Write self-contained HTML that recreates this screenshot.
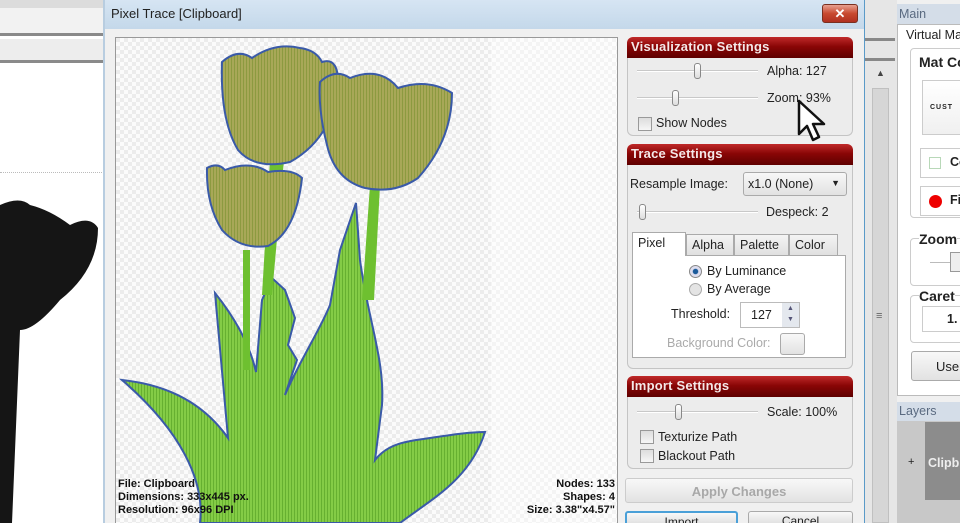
<!DOCTYPE html>
<html style="overflow:hidden"><head><meta charset="utf-8"><style>
*{margin:0;padding:0;box-sizing:border-box}
html,body{width:960px;height:523px;overflow:hidden}
body{position:relative;background:#f0f0f0;font-family:"Liberation Sans",sans-serif;font-size:12.5px;color:#222}
.a{position:absolute;white-space:nowrap}
.hdr{position:absolute;left:627px;width:226px;height:21px;border-radius:6px 6px 0 0;background:linear-gradient(#c02a2a,#8a0606 45%,#5e0000);color:#f4e8e8;font-weight:bold;font-size:13px;padding:2px 4px;letter-spacing:.2px}
.box{position:absolute;left:627px;width:226px;background:#ececec;border:1px solid #c4c4c4;border-top:none;border-radius:0 0 6px 6px}
.trk{position:absolute;height:2px;background:#c8c8c8;border-bottom:1px solid #fff}
.th{position:absolute;width:7px;height:16px;background:linear-gradient(#fff,#ddd);border:1px solid #888;border-radius:3px}
.cb{position:absolute;width:14px;height:14px;border:1px solid #999;background:linear-gradient(#ddd,#f6f6f6)}
.btn{position:absolute;border:1px solid #aaa;border-radius:3px;background:linear-gradient(#f8f8f8,#e2e2e2);text-align:center;white-space:nowrap;overflow:hidden}
.tab{position:absolute;top:234px;height:22px;border:1px solid #aaa;background:linear-gradient(#f4f4f4,#e0e0e0);padding:3px 5px}
#mp{position:absolute;left:897px;top:0;width:63px;height:523px;overflow:hidden}
#mp .a{margin-left:-897px}
</style></head><body>
<!-- left background app -->
<div class="a" style="left:0;top:0;width:104px;height:523px;background:#fff"></div>
<div class="a" style="left:0;top:0;width:104px;height:8px;background:#dcdcdc"></div>
<div class="a" style="left:0;top:8px;width:104px;height:28px;background:#f2f2f2;border-bottom:3px solid #8a8a8a"></div>
<div class="a" style="left:0;top:39px;width:104px;height:24px;background:#ededed;border-bottom:3px solid #8a8a8a"></div>
<div class="a" style="left:0;top:172px;width:104px;border-top:1px dotted #bbb"></div>
<svg class="a" style="left:0;top:0" width="104" height="523"><path d="M0,205 Q20,196 30,205 Q50,210 70,225 Q90,215 98,228 Q98,270 60,300 Q35,330 20,330 L12,523 L0,523Z" fill="#151515"/></svg>
<!-- scroll area right -->
<div class="a" style="left:863px;top:0;width:34px;height:523px;background:#e6e6e6;border-left:2px solid #5a9ac8"></div>
<div class="a" style="left:865px;top:38px;width:30px;height:3px;background:#888"></div>
<div class="a" style="left:865px;top:58px;width:30px;height:3px;background:#888"></div>
<div class="a" style="left:872px;top:88px;width:17px;height:435px;background:#d6d6d6;border:1px solid #c0c0c0"></div>
<div class="a" style="left:876px;top:68px;font-size:9px;color:#444">▲</div>
<div class="a" style="left:876px;top:310px;font-size:11px;color:#666">≡</div>
<!-- Main panel -->
<div id="mp">
<div class="a" style="left:897px;top:4px;width:63px;height:20px;background:#d4dde8;color:#5a6a80;padding:3px 2px;font-size:12.5px">Main</div>
<div class="a" style="left:897px;top:24px;width:70px;height:372px;background:#fff;border:1px solid #bbb"></div>
<div class="a" style="left:906px;top:28px">Virtual Ma</div>
<div class="a" style="left:910px;top:48px;width:60px;height:170px;border:1px solid #ccc;border-radius:4px"></div>
<div class="a" style="left:919px;top:54px;font-weight:bold;font-size:14px;background:#fff">Mat Co</div>
<div class="a" style="left:922px;top:80px;width:48px;height:55px;border:1px solid #ccc;background:linear-gradient(#fff,#f0f0f0)"></div>
<div class="a" style="left:930px;top:104px;font-size:7px;font-weight:bold;letter-spacing:1px">CUST</div>
<div class="a" style="left:920px;top:148px;width:50px;height:30px;border:1px solid #ccc"></div>
<div class="a" style="left:929px;top:157px;width:12px;height:12px;border:1px solid #b8d8b8"></div>
<div class="a" style="left:950px;top:155px;font-weight:bold">Co</div>
<div class="a" style="left:920px;top:186px;width:50px;height:30px;border:1px solid #ccc"></div>
<div class="a" style="left:929px;top:195px;width:13px;height:13px;border-radius:50%;background:#e00"></div>
<div class="a" style="left:950px;top:193px;font-weight:bold">Fi</div>
<div class="a" style="left:910px;top:238px;width:60px;height:48px;border:1px solid #ccc;border-radius:4px"></div>
<div class="a" style="left:919px;top:231px;font-weight:bold;font-size:14px;background:#fff">Zoom</div>
<div class="a" style="left:930px;top:262px;width:30px;height:1px;background:#bbb"></div>
<div class="a" style="left:950px;top:252px;width:14px;height:20px;border:1px solid #999;background:#eee"></div>
<div class="a" style="left:910px;top:295px;width:60px;height:48px;border:1px solid #ccc;border-radius:4px"></div>
<div class="a" style="left:919px;top:288px;font-weight:bold;font-size:14px;background:#fff">Caret</div>
<div class="a" style="left:922px;top:306px;width:48px;height:26px;border:1px solid #ccc"></div>
<div class="a" style="left:947px;top:312px;font-weight:bold">1.</div>
<div class="a" style="left:911px;top:351px;width:60px;height:30px;border:1px solid #aaa;border-radius:3px;background:linear-gradient(#f8f8f8,#e2e2e2);padding-top:7px;padding-left:24px;font-size:13px">Use</div>
<div class="a" style="left:897px;top:402px;width:63px;height:19px;background:#d4dde8;color:#5a6a80;padding:2px 2px">Layers</div>
<div class="a" style="left:897px;top:421px;width:63px;height:102px;background:#c8c8c8"></div>
<div class="a" style="left:925px;top:422px;width:35px;height:78px;background:#8c8c8c"></div>
<div class="a" style="left:908px;top:456px;font-size:11px">+</div>
<div class="a" style="left:928px;top:456px;color:#eee;font-weight:bold">Clipb</div>
</div>
<!-- dialog -->
<div class="a" style="left:103px;top:0;width:761px;height:523px;background:#f0f0f0;border-left:2px solid #b8cde0"></div>
<div class="a" style="left:103px;top:0;width:761px;height:29px;background:linear-gradient(#d6e5f3,#c4d8ea);border-left:2px solid #b8cde0"></div>
<div class="a" style="left:111px;top:6px;font-size:13px;color:#222">Pixel Trace [Clipboard]</div>
<div class="a" style="left:822px;top:4px;width:36px;height:19px;border-radius:3px;background:linear-gradient(#e8a090,#c84a30 50%,#b03020);border:1px solid #7a3020;color:#fff;font-weight:bold;text-align:center;font-size:13px;line-height:17px">✕</div>
<div class="a" style="left:115px;top:37px;width:503px;height:486px;border:1px solid #999;background:#fafafa"></div>
<svg class="a" style="left:116px;top:38px" width="501" height="485">
<defs>
<pattern id="ck" width="8" height="8" patternUnits="userSpaceOnUse"><rect width="8" height="8" fill="#fbfbfb"/><rect width="4" height="4" fill="#ececec"/><rect x="4" y="4" width="4" height="4" fill="#ececec"/></pattern>
<pattern id="ol" width="3" height="10" patternUnits="userSpaceOnUse"><rect width="3" height="10" fill="#a8a858"/><rect width="1" height="10" fill="#8c9a40"/></pattern>
<pattern id="gr" width="3" height="10" patternUnits="userSpaceOnUse"><rect width="3" height="10" fill="#84cc46"/><rect width="1" height="10" fill="#66b030"/></pattern>
</defs>
<rect width="501" height="485" fill="url(#ck)"/>
<rect x="375" width="126" height="485" fill="#fff" opacity=".45"/>
<g transform="translate(-116,-38)" stroke="#3a5aa8" stroke-width="2">
<path d="M122,380 C170,385 205,405 228,438 L215,293 C235,318 250,345 256,372 L262,300 L272,278 L285,290 L295,318 L288,345 L297,360 L285,395 C300,360 320,330 330,305 L340,250 L356,203 L360,260 C368,320 385,360 382,405 L375,460 C390,440 420,440 430,438 C450,435 470,432 485,432 C470,480 430,500 400,523 L200,523 C205,480 180,430 122,380Z" fill="url(#gr)"/>
<path d="M243,250 L243,370 L250,370 L250,250Z M270,160 L262,295 L272,295 L284,160Z M370,185 L362,300 L374,300 L380,185Z" fill="#6ec030" stroke="none"/>
<path d="M222,62 Q238,48 252,58 Q275,42 300,48 Q316,50 322,62 Q340,56 338,90 Q330,140 290,162 Q255,170 238,150 Q220,120 222,62Z" fill="url(#ol)"/>
<path d="M320,82 Q335,68 350,78 Q380,66 398,88 Q428,78 452,93 Q452,140 418,178 Q395,194 365,188 Q335,180 327,145 Q318,110 320,82Z" fill="url(#ol)"/>
<path d="M207,168 Q218,162 225,170 Q250,160 268,172 Q292,168 302,178 Q296,232 268,246 Q240,250 222,230 Q206,205 207,168Z" fill="url(#ol)"/>
</g>
</svg>
<div class="a" style="left:118px;top:478px;font-size:11px;font-weight:bold;line-height:13px;color:#111">File: Clipboard<br>Dimensions: 333x445 px.<br>Resolution: 96x96 DPI</div>
<div class="a" style="left:480px;top:478px;width:135px;text-align:right;font-size:11px;font-weight:bold;line-height:13px;color:#111">Nodes: 133<br>Shapes: 4<br>Size: 3.38"x4.57"</div>
<!-- Visualization -->
<div class="hdr" style="top:37px">Visualization Settings</div>
<div class="box" style="top:58px;height:78px"></div>
<div class="trk" style="left:637px;top:70px;width:121px"></div><div class="th" style="left:694px;top:63px"></div>
<div class="a" style="left:767px;top:64px">Alpha: 127</div>
<div class="trk" style="left:637px;top:97px;width:121px"></div><div class="th" style="left:672px;top:90px"></div>
<div class="a" style="left:767px;top:91px">Zoom: 93%</div>
<div class="cb" style="left:638px;top:117px"></div><div class="a" style="left:656px;top:116px">Show Nodes</div>
<svg class="a" style="left:796px;top:98px" width="34" height="48"><path d="M3,3 L3,36 L11,28 L17,42 L23,39 L17,26 L28,26Z" fill="#fff" stroke="#111" stroke-width="2.5" stroke-linejoin="round"/></svg>
<!-- Trace -->
<div class="hdr" style="top:144px">Trace Settings</div>
<div class="box" style="top:165px;height:204px"></div>
<div class="a" style="left:630px;top:177px">Resample Image:</div>
<div class="btn" style="left:743px;top:172px;width:104px;height:24px;text-align:left;padding:4px 4px">x1.0 (None)<span style="position:absolute;right:6px;top:5px;font-size:9px">▼</span></div>
<div class="trk" style="left:637px;top:211px;width:121px"></div><div class="th" style="left:639px;top:204px"></div>
<div class="a" style="left:766px;top:205px">Despeck: 2</div>
<div class="a" style="left:632px;top:255px;width:214px;height:103px;background:#fff;border:1px solid #aaa"></div>
<div class="tab" style="left:632px;top:232px;height:24px;width:54px;background:#fff;border-bottom:none">Pixel</div>
<div class="tab" style="left:686px;width:48px">Alpha</div>
<div class="tab" style="left:734px;width:55px">Palette</div>
<div class="tab" style="left:789px;width:49px">Color</div>
<div class="a" style="left:689px;top:265px;width:13px;height:13px;border-radius:50%;border:1px solid #888;background:radial-gradient(#1a5a9a 30%,#dde 40%)"></div>
<div class="a" style="left:707px;top:264px">By Luminance</div>
<div class="a" style="left:689px;top:283px;width:13px;height:13px;border-radius:50%;border:1px solid #aaa;background:#e4e4e4"></div>
<div class="a" style="left:707px;top:282px">By Average</div>
<div class="a" style="left:671px;top:307px">Threshold:</div>
<div class="a" style="left:740px;top:302px;width:60px;height:26px;border:1px solid #bbb;background:#fff;padding:5px 10px">127</div>
<div class="a" style="left:782px;top:303px;width:17px;height:24px;background:#e4e8ee;font-size:7px;color:#557;text-align:center;line-height:11px">▲<br>▼</div>
<div class="a" style="left:667px;top:336px;color:#aaa">Background Color:</div>
<div class="btn" style="left:780px;top:333px;width:25px;height:22px"></div>
<!-- Import -->
<div class="hdr" style="top:376px">Import Settings</div>
<div class="box" style="top:397px;height:72px"></div>
<div class="trk" style="left:637px;top:411px;width:121px"></div><div class="th" style="left:675px;top:404px"></div>
<div class="a" style="left:767px;top:405px">Scale: 100%</div>
<div class="cb" style="left:640px;top:430px"></div><div class="a" style="left:658px;top:430px">Texturize Path</div>
<div class="cb" style="left:640px;top:449px"></div><div class="a" style="left:658px;top:449px">Blackout Path</div>
<div class="btn" style="left:625px;top:478px;width:228px;height:25px;color:#a8a8a8;font-weight:bold;font-size:13px;padding-top:5px;border-color:#ccc">Apply Changes</div>
<div class="btn" style="left:625px;top:511px;width:113px;height:12px;border:2px solid #4aa0d8;border-bottom:none;border-radius:3px 3px 0 0;padding-top:3px;font-size:12px;line-height:12px">Import</div>
<div class="btn" style="left:748px;top:511px;width:105px;height:12px;border-bottom:none;border-radius:3px 3px 0 0;padding-top:3px;font-size:12px;line-height:12px">Cancel</div>
</body></html>
